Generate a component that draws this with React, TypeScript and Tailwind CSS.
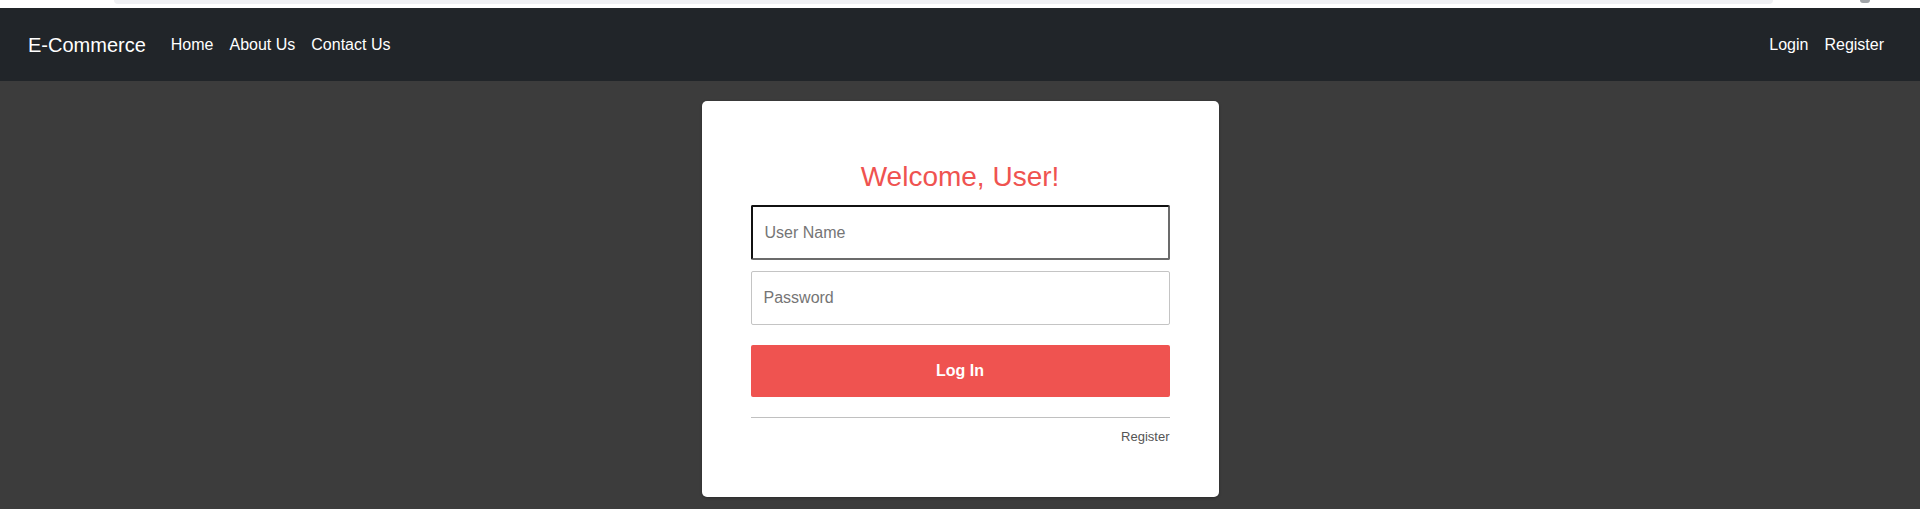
import React from "react";

const Navbar = () => {
  return (
    <nav className="flex h-[73px] items-center justify-between bg-[#212529] pl-[28px] pr-[28px]">
      <div className="flex items-center">
        <a href="#" className="mr-[17px] text-[20px] leading-[30px] text-white">
          E-Commerce
        </a>
        <ul className="flex items-center">
          <li>
            <a href="#" className="px-2 text-[16px] leading-6 text-white">Home</a>
          </li>
          <li>
            <a href="#" className="px-2 text-[16px] leading-6 text-white">About Us</a>
          </li>
          <li>
            <a href="#" className="px-2 text-[16px] leading-6 text-white">Contact Us</a>
          </li>
        </ul>
      </div>
      <ul className="flex items-center">
        <li>
          <a href="#" className="px-2 text-[16px] leading-6 text-white">Login</a>
        </li>
        <li>
          <a href="#" className="px-2 text-[16px] leading-6 text-white">Register</a>
        </li>
      </ul>
    </nav>
  );
};

const LoginCard = () => {
  return (
    <div className="w-[517px] rounded-[5px] bg-white px-[49px] pt-[59px] pb-[50px] shadow-[0_1px_3px_rgba(0,0,0,0.3)]">
      <h2 className="mb-[11px] text-center text-[28px] leading-[34px] text-[#ef5350]">
        Welcome, User!
      </h2>
      <form className="flex flex-col" onSubmit={(e) => e.preventDefault()}>
        <input
          type="text"
          placeholder="User Name"
          className="h-[55px] w-full rounded-[2px] border-2 border-t-[#111] border-l-[#111] border-r-[#6b6b6b] border-b-[#6b6b6b] px-3 text-[16px] text-[#333] outline-none placeholder:text-[#757575]"
        />
        <input
          type="password"
          placeholder="Password"
          className="mt-[11px] h-[54px] w-full rounded-[2px] border border-[#c4c4c4] px-3 text-[16px] text-[#333] outline-none placeholder:text-[#757575]"
        />
        <button
          type="submit"
          className="mt-[20px] h-[52px] w-full rounded-[2px] bg-[#ef5350] text-[16px] font-bold text-white"
        >
          Log In
        </button>
      </form>
      <hr className="mt-[20px] border-0 border-t border-[#c0c0c0]" />
      <div className="mt-[9px] text-right text-[13px] leading-5">
        <a href="#" className="text-[#555]">Register</a>
      </div>
    </div>
  );
};

export default function App() {
  return (
    <div className="h-[509px] overflow-hidden bg-[#3c3c3c] font-['Liberation_Sans',Arial,sans-serif]">
      {/* leftover browser chrome at the very top */}
      <div className="flex h-2 bg-white">
        <div className="ml-[114px] h-1 flex-1 rounded-b-[6px] bg-[#eff0f3]" />
        <div className="ml-[87px] mr-[50px] h-[3px] w-[10px] rounded-b-full bg-[#a0a4a8]" />
      </div>
      <Navbar />
      <main className="flex justify-center pt-[20px]">
        <LoginCard />
      </main>
    </div>
  );
}
